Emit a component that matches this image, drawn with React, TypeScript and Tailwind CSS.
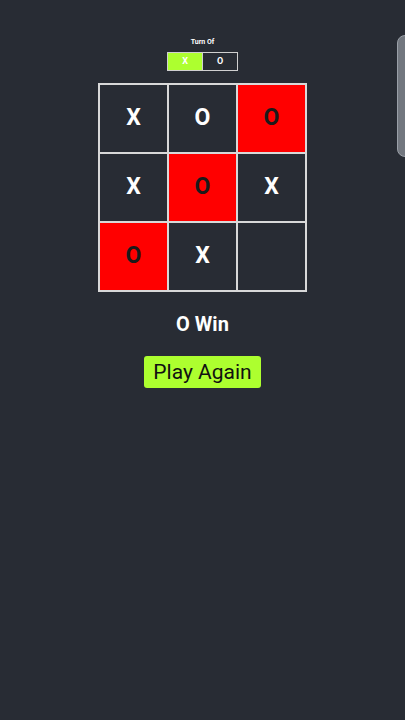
import React from "react";

const cells: { v: string; win: boolean }[] = [
  { v: "X", win: false },
  { v: "O", win: false },
  { v: "O", win: true },
  { v: "X", win: false },
  { v: "O", win: true },
  { v: "X", win: false },
  { v: "O", win: true },
  { v: "X", win: false },
  { v: "", win: false },
];

export default function App() {
  return (
    <div
      className="relative w-[405px] h-[720px] bg-[#282c34] overflow-hidden flex flex-col items-center"
      style={{ fontFamily: "Roboto, 'Liberation Sans', sans-serif" }}
    >
      <div className="mt-[38px] text-[7px] font-bold text-white leading-[8px]">Turn Of</div>
      <div className="mt-[6px] flex w-[71px] h-[19px] border border-[#d0d0d0]">
        <div className="flex-1 bg-[#adff2f] flex items-center justify-center text-[9px] font-bold text-white">X</div>
        <div className="flex-1 flex items-center justify-center text-[9px] font-bold text-white border-l border-[#d0d0d0]">O</div>
      </div>
      <div className="mt-[12px] grid grid-cols-3 gap-[2px] bg-[#d9d9d9] p-[2px] w-[209px] h-[209px]">
        {cells.map((c, i) => (
          <div
            key={i}
            className={`flex items-center justify-center text-[23px] font-bold ${
              c.win ? "bg-[#ff0000] text-[#1a1a1a]" : "bg-[#282c34] text-white"
            }`}
          >
            {c.v}
          </div>
        ))}
      </div>
      <div className="mt-[20px] text-[20px] font-bold text-white leading-[24px]">O Win</div>
      <button className="mt-[20px] w-[117px] h-[32px] bg-[#adff2f] rounded-[3px] text-[21px] text-[#111] leading-none">
        Play Again
      </button>
      <div className="absolute left-[397px] top-[35px] w-[16px] h-[122px] rounded-[8px] bg-[#72777f] border border-[#9aa0a8]" />
    </div>
  );
}
